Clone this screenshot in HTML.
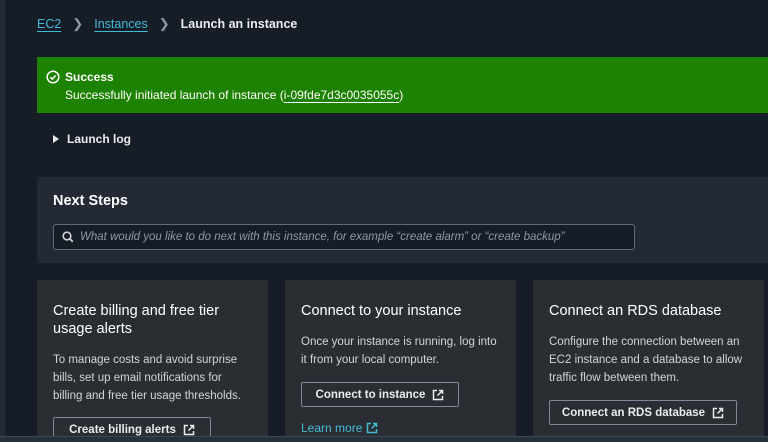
<!DOCTYPE html>
<html><head><style>
*{margin:0;padding:0;box-sizing:border-box}
body{width:768px;height:442px;overflow:hidden;background:#161d26;font-family:"Liberation Sans",sans-serif;color:#d1d5db;position:relative}
.ls{position:absolute;left:0;top:0;width:5px;height:442px;background:#232a33}
.bc{position:absolute;top:16px;left:37px;font-size:12.5px;display:flex;align-items:center}
.bc a{color:#44b9d6;text-decoration:underline;text-underline-offset:3px}
.bc .sep{color:#8d99a8;margin:0 11px;font-size:13px}
.bc b{color:#e9ebed}
.succ{position:absolute;left:37px;top:57px;width:731px;height:56px;background:#1d8102;color:#fff;font-size:12px}
.succ .t{position:absolute;left:28px;top:13px;font-weight:bold}
.succ .m{position:absolute;left:28px;top:31px}
.succ .m u{text-underline-offset:3px}
.succ svg{position:absolute;left:9px;top:13px}
.log{position:absolute;left:53px;top:132px;font-size:12px;font-weight:bold;color:#e9ebed}
.log span{display:inline-block;width:0;height:0;border-left:6px solid #e9ebed;border-top:4.5px solid transparent;border-bottom:4.5px solid transparent;margin-right:8px;vertical-align:0}
.ns{position:absolute;left:37px;top:177px;width:731px;height:86px;background:#232a33}
.ns h2{position:absolute;left:16px;top:16px;font-size:14.5px;color:#fff}
.srch{position:absolute;left:16px;top:47px;width:582px;height:26px;border:1px solid #5f6b7a;border-radius:3px;background:#161d26;font-style:italic;color:#8d99a8;font-size:11.5px;padding:6px 0 0 26px}
.srch svg{position:absolute;left:8px;top:6px}
.card{position:absolute;top:280px;width:231px;height:160px;background:#2a2e33}
.card h3{position:absolute;left:16px;top:22px;font-weight:normal;font-size:14.5px;line-height:18px;color:#fff;width:210px}
.card p{position:absolute;left:16px;font-size:11.5px;line-height:18px;color:#d1d5db;width:205px}
.btn{position:absolute;left:16px;height:25px;border:1px solid #7d8998;border-radius:2px;font-size:11.5px;font-weight:bold;color:#e9ebed;display:flex;align-items:center;justify-content:center;gap:7px}
.lm{position:absolute;left:16px;top:141px;color:#44b9d6;font-size:12px;display:flex;gap:4px;align-items:center}
.bot{position:absolute;left:0;top:436px;width:768px;height:6px;background:#27313c;border-top:1px solid #3a4654}
</style></head><body>
<div class="ls"></div>
<div class="bc"><a>EC2</a><span class="sep">&#x276F;</span><a>Instances</a><span class="sep">&#x276F;</span><b>Launch an instance</b></div>
<div class="succ">
<svg width="14" height="14" viewBox="0 0 14 14"><circle cx="7" cy="7" r="5.8" fill="none" stroke="#fff" stroke-width="1.5"/><path d="M4.3 7.2l2 1.9 3.4-3.6" fill="none" stroke="#fff" stroke-width="1.5"/></svg>
<div class="t">Success</div>
<div class="m">Successfully initiated launch of instance (<u>i-09fde7d3c0035055c</u>)</div>
</div>
<div class="log"><span></span>Launch log</div>
<div class="ns"><h2>Next Steps</h2>
<div class="srch"><svg width="12" height="12" viewBox="0 0 12 12"><circle cx="5" cy="5" r="3.8" fill="none" stroke="#d1d5db" stroke-width="1.6"/><path d="M7.8 7.8l3 3" stroke="#d1d5db" stroke-width="1.8"/></svg>What would you like to do next with this instance, for example “create alarm” or “create backup”</div></div>
<svg width="0" height="0" style="position:absolute"><defs><symbol id="ext" viewBox="0 0 12 12"><path d="M5 1.5H1.5v9h9V7M7 1.5h3.5V5M10.5 1.5L5.5 6.5" fill="none" stroke="currentColor" stroke-width="1.5"/></symbol></defs></svg>
<div class="card" style="left:37px"><h3 style="width:185px">Create billing and free tier usage alerts</h3>
<p style="top:71px;width:190px">To manage costs and avoid surprise bills, set up email notifications for billing and free tier usage thresholds.</p>
<div class="btn" style="top:137px;width:158px">Create billing alerts <svg width="12" height="12"><use href="#ext"/></svg></div></div>
<div class="card" style="left:285px"><h3>Connect to your instance</h3>
<p style="top:53px;width:196px">Once your instance is running, log into it from your local computer.</p>
<div class="btn" style="top:102px;width:158px">Connect to instance <svg width="12" height="12"><use href="#ext"/></svg></div>
<div class="lm">Learn more <svg width="12" height="12" style="color:#44b9d6"><use href="#ext"/></svg></div></div>
<div class="card" style="left:533px"><h3>Connect an RDS database</h3>
<p style="top:53px">Configure the connection between an EC2 instance and a database to allow traffic flow between them.</p>
<div class="btn" style="top:120px;width:188px">Connect an RDS database <svg width="12" height="12"><use href="#ext"/></svg></div></div>
<div class="bot"></div>
</body></html>
